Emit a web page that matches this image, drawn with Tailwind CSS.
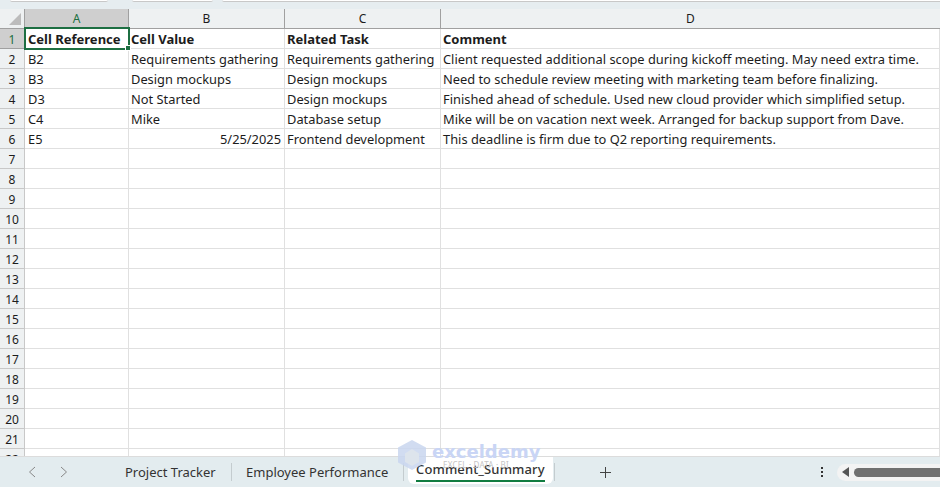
<!DOCTYPE html>
<html lang="en">
<head>
  <meta charset="UTF-8">
  <title>Comment_Summary</title>
  <script src="https://cdn.jsdelivr.net/npm/@tailwindcss/browser@4"></script>
</head>
<body class="w-[940px] h-[487px] overflow-hidden bg-white relative font-['Noto_Sans',sans-serif] text-[12.85px] text-[#1c1c1c]">
  <!-- top strip -->
  <div class="h-[9px] bg-[#e6edf0] flex items-start">
    <div class="ml-[10px] w-[98px] h-[2px] bg-white border-b border-[#c8c8c8] rounded-b-sm"></div>
    <div class="ml-[24px] w-[81px] h-[2px] bg-white border-b border-[#c8c8c8] rounded-b-sm"></div>
    <div class="ml-[9px] flex-1 h-[2px] bg-white border-b border-[#c8c8c8] rounded-bl-sm"></div>
  </div>

  <!-- sheet -->
  <div class="h-[447px] overflow-hidden">
    <div id="sheet" class="grid grid-cols-[25px_104px_156px_156px_499px] auto-rows-[20px]">
      <div class="bg-[#eef1f2] border-r border-b border-[#a0a0a0] relative">
        <div class="absolute right-[3px] bottom-[3px] w-0 h-0 border-l-[12px] border-l-transparent border-b-[12px] border-b-[#bcbcbc]"></div>
      </div>
      <div class="bg-[#cfcfcf] border-r border-b border-[#a0a0a0] text-[#1d6f42] text-xs flex items-center justify-center">A</div>
      <div class="bg-[#eef1f2] border-r border-b border-[#a0a0a0] text-xs flex items-center justify-center">B</div>
      <div class="bg-[#eef1f2] border-r border-b border-[#a0a0a0] text-xs flex items-center justify-center">C</div>
      <div class="bg-[#eef1f2] border-b border-[#a0a0a0] text-xs flex items-center justify-center">D</div>
    </div>
  </div>

  <!-- selected cell -->
  <div class="absolute left-[24px] top-[27px] w-[106px] h-[23px] border-2 border-[#1d6f42]">
    <div class="absolute -right-[3px] -bottom-[3px] w-[6px] h-[6px] bg-[#1d6f42] border border-white"></div>
  </div>

  <!-- tab bar -->
  <div class="absolute left-0 right-0 bottom-0 h-[31px] bg-[#e3ecef] border-t border-[#dcdcdc] flex items-center text-[13px] text-[#333]">
    <div class="w-[125px] flex items-center pl-[28px] gap-[24px] text-[#888]">
      <svg width="8" height="12" viewBox="0 0 8 12" fill="none" stroke="currentColor" stroke-width="1"><path d="M7 1 1.5 6 7 11"/></svg>
      <svg width="8" height="12" viewBox="0 0 8 12" fill="none" stroke="currentColor" stroke-width="1"><path d="M1 1 6.5 6 1 11"/></svg>
    </div>
    <span class="w-[92px] pt-[1px] whitespace-nowrap">Project Tracker</span>
    <div class="w-px h-[18px] bg-[#c4cccf] ml-[14px] mr-[14px]"></div>
    <span class="w-[142px] pt-[1px] whitespace-nowrap">Employee Performance</span>
    <div class="w-px h-[18px] bg-[#c4cccf] ml-[15px] mr-[4px]"></div>
    <div class="relative h-[27px] -mt-[4px] w-[145px] pl-[8px] bg-white rounded-b-md flex items-center font-medium tracking-[0.01em] whitespace-nowrap">
      Comment_Summary
      <div class="absolute left-[8px] right-[8px] bottom-[2px] h-[2px] bg-[#107c41]"></div>
    </div>
    <div class="w-px h-[18px] bg-[#c4cccf] ml-[1px]"></div>
    <svg class="ml-[44px]" width="13" height="13" viewBox="0 0 13 13" stroke="#444" stroke-width="1"><path d="M6.5 1v11M1 6.5h11"/></svg>
    <div class="ml-[209px] flex flex-col gap-[2px]">
      <div class="w-[2px] h-[2px] bg-[#333]"></div>
      <div class="w-[2px] h-[2px] bg-[#333]"></div>
      <div class="w-[2px] h-[2px] bg-[#333]"></div>
    </div>
    <div class="ml-[14px] flex-1 h-[17px] bg-[#f3f3f3] rounded-l-full flex items-center pl-[5px] gap-[5px]">
      <div class="w-0 h-0 border-y-[5px] border-y-transparent border-r-[7px] border-r-[#555]"></div>
      <div class="flex-1 h-[9px] bg-[#707070] rounded-l-full"></div>
    </div>
  </div>

  <!-- watermark -->
  <div class="absolute left-[398px] top-[440px] flex items-start gap-[6px] pointer-events-none">
    <svg width="28" height="30" viewBox="0 0 28 30">
      <path d="M14 0 28 7.5V22.5L14 30 0 22.5V7.5Z" fill="#c9d6ef" fill-opacity=".85"/>
      <path d="M14 9 21 13.5V22L14 26 7 22V13.5Z" fill="#dde4ec"/>
    </svg>
    <div class="font-['DejaVu_Sans',sans-serif] font-bold text-[18px] leading-[24px] text-[#c9d5f5]">exceldemy</div>
  </div>
  <div class="absolute left-[443px] top-[460px] text-[8px] leading-[10px] text-[#c4c4c4] tracking-wide pointer-events-none">EXCEL · DATA · BI</div>

  <script>
    const data = [
      ['Cell Reference', 'Cell Value', 'Related Task', 'Comment'],
      ['B2', 'Requirements gathering', 'Requirements gathering', 'Client requested additional scope during kickoff meeting. May need extra time.'],
      ['B3', 'Design mockups', 'Design mockups', 'Need to schedule review meeting with marketing team before finalizing.'],
      ['D3', 'Not Started', 'Design mockups', 'Finished ahead of schedule. Used new cloud provider which simplified setup.'],
      ['C4', 'Mike', 'Database setup', 'Mike will be on vacation next week. Arranged for backup support from Dave.'],
      ['E5', '5/25/2025', 'Frontend development', 'This deadline is firm due to Q2 reporting requirements.'],
    ];
    const sheet = document.getElementById('sheet');
    for (let r = 0; r < 22; r++) {
      const head = document.createElement('div');
      head.className = r === 0
        ? 'bg-[#cfcfcf] border-r border-b border-[#a0a0a0] text-[#1d6f42] text-xs pt-[2px] flex items-center justify-center'
        : 'bg-[#eef1f2] border-r border-b border-[#c8c8c8] text-xs pt-[2px] flex items-center justify-center';
      head.textContent = r + 1;
      sheet.appendChild(head);
      for (let c = 0; c < 4; c++) {
        const cell = document.createElement('div');
        cell.className = 'border-r border-b border-[#e0e0e0] pt-[2px] pr-[3px] flex items-center whitespace-nowrap overflow-hidden';
        cell.classList.add(c === 0 ? 'pl-[3px]' : 'pl-[2px]');
        const text = data[r] ? data[r][c] : '';
        cell.textContent = text;
        if (r === 0) cell.classList.add('font-bold', 'text-[13px]');
        if (text === '5/25/2025') cell.classList.add('justify-end');
        sheet.appendChild(cell);
      }
    }
  </script>
</body>
</html>
